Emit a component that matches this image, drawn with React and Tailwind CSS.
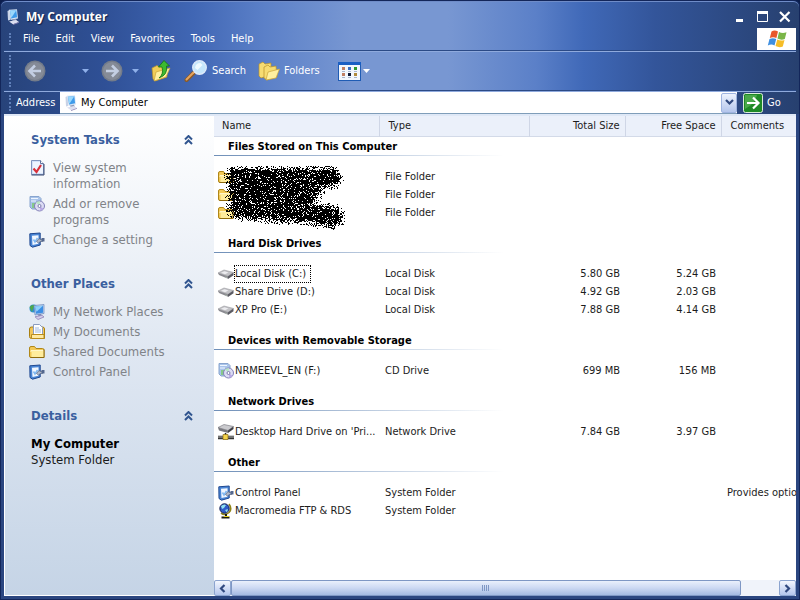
import React from "react";

const XP_FONT =
  "font-['Tahoma','DejaVu_Sans_Condensed','DejaVu_Sans',sans-serif]";

const ComputerIcon = ({ className = "w-4 h-4" }) => (
  <svg viewBox="0 0 16 16" className={className} aria-hidden="true">
    <path d="M1.500 2L4 .8V11l-2 .6z" fill="#c9d3e6" />
    <path d="M3 .8l8-.6 1 9.300-7.500 1.500z" fill="#d6e4f6" />
    <path d="M4 1.800l6.300-.5.8 7-6 1.300z" fill="#3f9bea" />
    <path d="M4 1.800l6.300-.5-5 7.600z" fill="#9ad8fc" />
    <path d="M6 10.500l4-.8 1 2.500-4 .8z" fill="#8f9bb8" />
    <path d="M3 12.500l7-1.500 3 2-6 2.200z" fill="#dcdff0" />
    <path d="M7 15.200l6-2.200v.8l-6 2.200z" fill="#8c82b4" />
  </svg>
);

const FolderIcon = ({ className = "w-4 h-4" }) => (
  <svg viewBox="0 0 16 16" className={className} aria-hidden="true">
    <path
      d="M.5 4q0-1.500 1.500-1.500h3.500l1.500 2h6.500q1.500 0 1.500 1.500v7.500h-13q-1.500 0-1.500-1.500z"
      fill="#f3c956"
      stroke="#b08718"
    />
    <path d="M2.500 6.500h12.500v6.500h-12.500z" fill="#ffec9c" />
    <path d="M2 8V6.500h12.500" fill="none" stroke="#fff6c8" />
    <path d="M1.500 13.500h13.500v-8" fill="none" stroke="#8f6a0c" />
  </svg>
);

const DocumentsIcon = () => (
  <svg viewBox="0 0 16 16" className="w-4 h-4" aria-hidden="true">
    <path d="M.5 5q0-2 2-2h11q2 0 2 2v9.500h-13q-2 0-2-2z" fill="#f2c65a" stroke="#a97f10" />
    <path d="M4.500 .5h6l3 3v8h-9z" fill="#fff" stroke="#8a9cc0" />
    <path d="M6 4h4M6 6h6M6 8h6" stroke="#9db8e0" />
    <path d="M2.500 10.500h12.500v4h-12.500z" fill="#ffe9a0" stroke="#b98c1c" />
  </svg>
);

const InfoIcon = () => (
  <svg viewBox="0 0 16 16" className="w-4 h-4" aria-hidden="true">
    <path d="M2.500 .5h9l3 3v11h-12z" fill="#d3e2fa" stroke="#8295bd" />
    <path d="M4 2h7v3h3v8H4z" fill="#eef4fe" />
    <path d="M11.500 .5v3h3" fill="#fff" stroke="#62759f" />
    <path d="M4.500 8.500l3 3.500 4.500-7" fill="none" stroke="#d8303a" strokeWidth="2.200" />
    <path d="M2.500 15h12.500V4" fill="none" stroke="#3a4a72" />
  </svg>
);

const CdIcon = () => (
  <svg viewBox="0 0 16 16" className="w-4 h-4" aria-hidden="true">
    <path d="M1 .5h9l2 2V13H3l-2-2z" fill="#a9c4ea" stroke="#88a4ce" />
    <path d="M2 2.500h7M2 5h5" stroke="#eef5ff" />
    <path d="M3 7h4v5H3z" fill="#86c98a" />
    <circle cx="10.500" cy="10" r="5" fill="#dcdcf4" stroke="#8280b8" />
    <path d="M10.500 10L7 6.500a5 5 0 0 1 4-1.300z" fill="#b8e6c4" />
    <path d="M10.500 10l4 2.800a5 5 0 0 1-3 2z" fill="#b9a8e6" />
    <circle cx="10.500" cy="10" r="1.500" fill="#fff" stroke="#7c7cae" />
  </svg>
);

const ControlPanelIcon = () => (
  <svg viewBox="0 0 16 16" className="w-4 h-4" aria-hidden="true">
    <path d="M.8 1.800L11.200 1v12L3.500 15.200 1 13.500z" fill="#4a86d6" stroke="#1f4890" />
    <path d="M3 3.800l6.500-.6v8.600L3.500 13z" fill="#f1f7ff" />
    <path d="M4.500 7.500l1.500 2.500 2.500-4" fill="none" stroke="#7fb8f2" strokeWidth="1.500" />
    <path d="M7.500 9.500l2.500-3 1.500 1h2v2h-2L9.500 11z" fill="#b0b8c8" stroke="#55627c" strokeWidth=".7" />
    <path d="M12.500 6h3v3.500h-3z" fill="#54688f" />
  </svg>
);

const NetworkIcon = () => (
  <svg viewBox="0 0 16 16" className="w-4 h-4" aria-hidden="true">
    <circle cx="4.500" cy="4.500" r="4" fill="#2c8fd0" />
    <path d="M.5 3q3-3 5-1.500L4 5 3 8z" fill="#4fa84c" />
    <path d="M5 1.500l10-1v9L6 11z" fill="#bcd2f0" stroke="#6b87ba" strokeWidth=".7" />
    <path d="M6 2.500l8-.8v7L7 9.800z" fill="#3c8ee4" />
    <path d="M6 2.500l8-.8-6.500 6z" fill="#8fd0fb" />
    <path d="M9 10.500l3-.6.6 1.600-3 .5z" fill="#7c88b0" />
    <path d="M6 12.800l7-1.500 2 1.700-6 2.500z" fill="#d4cdea" stroke="#8377b0" strokeWidth=".7" />
  </svg>
);

const DriveIcon = () => (
  <svg viewBox="0 0 16 16" className="w-4 h-4" aria-hidden="true">
    <path d="M0 7l6-3 9.500 2.500-5.500 3.800z" fill="#c2c2c6" stroke="#98989e" strokeWidth=".6" />
    <path d="M0 7l10 3.300v2.500L1 9z" fill="#8a8a90" />
    <path d="M10 10.300l5.500-3.800v2.800L10 13z" fill="#5a5a62" />
    <path d="M3 6.800l3.500-1.600 4 1.200-3.500 1.800z" fill="#ececef" />
    <path d="M7.500 11l1.500.5" stroke="#a8b8a8" />
  </svg>
);

const NetDriveIcon = () => (
  <svg viewBox="0 0 16 16" className="w-4 h-4" aria-hidden="true">
    <path d="M0 3.500l6-3 9.500 2-5.500 4z" fill="#cacace" stroke="#707078" strokeWidth=".6" />
    <path d="M0 3.500l10 3V9L1 6.500z" fill="#77777d" />
    <path d="M10 6.500l5.500-4V5L10 9z" fill="#3e3e46" />
    <path d="M7.500 9v3" stroke="#222" strokeWidth="1.500" />
    <path d="M0 13.500h16" stroke="#333" strokeWidth="3.500" />
    <path d="M0 13h16" stroke="#b4b4b4" />
    <path d="M5 10.500h5v5H5z" fill="#f3d24a" stroke="#8b6b10" strokeWidth=".7" />
  </svg>
);

const GlobeIcon = () => (
  <svg viewBox="0 0 16 16" className="w-4 h-4" aria-hidden="true">
    <path d="M11 1q3.500 5 0 8.500-4 3.500-8 .5" fill="none" stroke="#8f8418" strokeWidth="1.600" />
    <circle cx="6.500" cy="5.500" r="4.700" fill="#2f5cc8" stroke="#101c50" />
    <path d="M3 3q3-2.500 5-1L6 5 4 6zM7 7l3-1-1 3.500z" fill="#8fe0f0" />
    <path d="M8 11v2.500M3.500 14.500h8" stroke="#1c1c10" strokeWidth="2" />
    <path d="M6 13.500h5" stroke="#e6d21c" />
  </svg>
);

const DoubleChevron = () => (
  <svg viewBox="0 0 9 10" className="w-[9px] h-[10px]" aria-hidden="true">
    <path d="M1 4.500L4.500 1 8 4.500M1 9L4.500 5.500 8 9" fill="none" stroke="#31558f" strokeWidth="2" />
  </svg>
);

const NavArrow = ({ flip }) => (
  <svg viewBox="0 0 22 22" className="w-[22px] h-[22px]" aria-hidden="true">
    <circle cx="11" cy="11" r="10.500" fill="#747c8a" />
    <circle cx="11" cy="11" r="9" fill="#858b97" />
    <path
      d={flip ? "M5 11h11M11 5.500l5.500 5.500-5.500 5.500" : "M17 11H6M11 5.500L5.500 11l5.500 5.500"}
      fill="none"
      stroke="#c3cee2"
      strokeWidth="2.600"
    />
  </svg>
);

const DropArrow = ({ className }) => (
  <svg viewBox="0 0 7 4" className={`w-[7px] h-1 ${className}`} aria-hidden="true">
    <path d="M0 0h7L3.500 4z" fill="currentColor" />
  </svg>
);

const UpFolderIcon = () => (
  <svg viewBox="0 0 20 22" className="w-5 h-[22px]" aria-hidden="true">
    <path d="M1 8l5-2.500 2 1.500 7-2 1 12-12 4-2-2z" fill="#f0cd58" stroke="#b8902a" strokeWidth=".7" />
    <path d="M3 21l2-9 14-4-4 9z" fill="#fff0a0" stroke="#c9a43a" strokeWidth=".7" />
    <path d="M8 18q5-4 3-11H7.500L13 .5 18.500 6h-3q1.500 9-7.500 12z" fill="#3cba30" stroke="#14720f" strokeWidth=".8" />
  </svg>
);

const SearchIcon = () => (
  <svg viewBox="0 0 24 22" className="w-6 h-[22px]" aria-hidden="true">
    <path d="M2.500 20L9.500 13" stroke="#8a5a28" strokeWidth="4" strokeLinecap="round" />
    <path d="M2.500 19.500L9.500 12.500" stroke="#e5a560" strokeWidth="2" strokeLinecap="round" />
    <circle cx="15.500" cy="7.500" r="6.800" fill="#c5e6fb" stroke="#dfeafa" strokeWidth="1.300" />
    <path d="M11 8q.5-5 5.500-5l2 2-5 5z" fill="#effaff" />
  </svg>
);

const FoldersIcon = () => (
  <svg viewBox="0 0 22 20" className="w-[22px] h-5" aria-hidden="true">
    <path d="M1 3l4-2 2 2 6-1v12l-10 3-2-2z" fill="#f7dc72" stroke="#b8902a" strokeWidth=".7" />
    <path d="M6 6l4-2 2 2 6-1 1 11-10 3-3-2z" fill="#f7dc72" stroke="#b8902a" strokeWidth=".7" />
    <path d="M8 19l2-8 11.500-3-3.500 9z" fill="#fff0a0" stroke="#c9a43a" strokeWidth=".7" />
  </svg>
);

const ViewsIcon = () => (
  <svg viewBox="0 0 23 19" className="w-[23px] h-[19px]" aria-hidden="true">
    <rect x=".5" y=".5" width="22" height="18" fill="#f3f7fd" stroke="#1f5cb4" />
    <path d="M0 1.500h23" stroke="#1a5fc4" strokeWidth="3" />
    <path d="M4 5h3v3H4zM4 11h3v3H4z" fill="#c07f62" />
    <path d="M10 5h3v3h-3z" fill="#3a6fc4" />
    <path d="M10 11h3v3h-3z" fill="#111c3a" />
    <path d="M16 5h3v3h-3z" fill="#2f9a30" />
    <path d="M16 11h3v3h-3z" fill="#b08a3c" />
    <path d="M4 9.500h3M10 9.500h3M16 9.500h3M4 15.500h3M10 15.500h3M16 15.500h3" stroke="#a9b6cc" />
  </svg>
);

const WindowsLogo = () => (
  <svg viewBox="0 0 20 18" className="w-5 h-[18px]" aria-hidden="true">
    <path d="M4.500 1.500q3-2 6.500 0L9.400 8Q6 6.500 2.800 8z" fill="#e8582c" />
    <path d="M12 2q3.500 2 7.500.3L17.800 9Q14 10.500 10.500 8.500z" fill="#7ab648" />
    <path d="M2.500 9q3.500-1.600 6.700 0L7.500 15.500q-3-1.800-6.700 0z" fill="#3f8fe0" />
    <path d="M10.300 9.600q3.500 1.700 7.200.4l-1.700 6.500q-3.500 1.500-7.300-.5z" fill="#f6bd27" />
  </svg>
);

// black spray over the three folder names, one pixel per dot
const STROKES = [
  [12, 11, 106, 11],
  [14, 29, 82, 30],
  [14, 41, 60, 46],
  [60, 44, 108, 50],
  [14, 20, 88, 22],
];

const buildSpray = () => {
  let seed = 7;
  const rand = () => {
    seed = (seed * 16807) % 2147483647;
    return seed / 2147483647;
  };
  let d = "";
  for (let y = 0; y < 64; y++) {
    for (let x = 0; x < 122; x++) {
      let dist = 99;
      STROKES.forEach(([x1, y1, x2, y2]) => {
        const len = (x2 - x1) ** 2 + (y2 - y1) ** 2;
        const t = Math.max(
          0,
          Math.min(1, ((x - x1) * (x2 - x1) + (y - y1) * (y2 - y1)) / len)
        );
        dist = Math.min(
          dist,
          Math.hypot(x - x1 - t * (x2 - x1), y - y1 - t * (y2 - y1))
        );
      });
      const chance = dist < 6 ? 0.86 : Math.max(0, 0.86 - (dist - 6) * 0.11);
      if (rand() < chance) d += `M${x} ${y}h1v1h-1z`;
    }
  }
  return d;
};

const SPRAY = buildSpray();

const groups = [
  {
    title: "Files Stored on This Computer",
    rows: [
      { icon: FolderIcon, name: "", type: "File Folder", spray: true },
      { icon: FolderIcon, name: "", type: "File Folder" },
      { icon: FolderIcon, name: "", type: "File Folder" },
    ],
  },
  {
    title: "Hard Disk Drives",
    rows: [
      { icon: DriveIcon, name: "Local Disk (C:)", type: "Local Disk", total: "5.80 GB", free: "5.24 GB", focused: true },
      { icon: DriveIcon, name: "Share Drive (D:)", type: "Local Disk", total: "4.92 GB", free: "2.03 GB" },
      { icon: DriveIcon, name: "XP Pro (E:)", type: "Local Disk", total: "7.88 GB", free: "4.14 GB" },
    ],
  },
  {
    title: "Devices with Removable Storage",
    rows: [
      { icon: CdIcon, name: "NRMEEVL_EN (F:)", type: "CD Drive", total: "699 MB", free: "156 MB" },
    ],
  },
  {
    title: "Network Drives",
    rows: [
      { icon: NetDriveIcon, name: "Desktop Hard Drive on 'Pri...", type: "Network Drive", total: "7.84 GB", free: "3.97 GB" },
    ],
  },
  {
    title: "Other",
    rows: [
      { icon: ControlPanelIcon, name: "Control Panel", type: "System Folder", comments: "Provides optio" },
      { icon: GlobeIcon, name: "Macromedia FTP & RDS", type: "System Folder" },
    ],
  },
];

const tasks = [
  { icon: InfoIcon, label: "View system information" },
  { icon: CdIcon, label: "Add or remove programs" },
  { icon: ControlPanelIcon, label: "Change a setting" },
];

const places = [
  { icon: NetworkIcon, label: "My Network Places" },
  { icon: DocumentsIcon, label: "My Documents" },
  { icon: FolderIcon, label: "Shared Documents" },
  { icon: ControlPanelIcon, label: "Control Panel" },
];

const Grip = ({ className }) => (
  <span className={`ml-[5px] w-0 border-l-2 border-dotted border-[#5f7fb8] ${className}`} />
);

const TitleBar = () => (
  <div className="flex items-center h-[26px] pl-[2px] pr-[5px] pt-1">
    <ComputerIcon />
    <h1 className="ml-1 flex-1 font-['Trebuchet_MS','Open_Sans',sans-serif] text-[12px] leading-4 font-bold [text-shadow:1px_1px_1px_#10204a]">
      My Computer
    </h1>
    <div className="flex items-center gap-[10px]">
      <button aria-label="Minimize">
        <svg viewBox="0 0 12 12" className="block w-3 h-3">
          <path d="M1 8h7v3H1z" fill="#fff" />
        </svg>
      </button>
      <button aria-label="Maximize">
        <svg viewBox="0 0 12 12" className="block w-3 h-3">
          <path d="M.5 1v9.500h10V1" fill="none" stroke="#fff" />
          <path d="M0 1.500h11" stroke="#fff" strokeWidth="3" />
        </svg>
      </button>
      <button aria-label="Close">
        <svg viewBox="0 0 12 12" className="block w-3 h-3">
          <path d="M1 1l9.500 9.500M10.500 1L1 10.500" stroke="#fff" strokeWidth="2.200" />
        </svg>
      </button>
    </div>
  </div>
);

const MenuBar = () => (
  <nav className="flex items-center h-[23px] border-b border-[#2b4a86]">
    <Grip className="h-3" />
    <div className="flex flex-1 ml-1">
      {["File", "Edit", "View", "Favorites", "Tools", "Help"].map((item) => (
        <button key={item} className="px-2">
          {item}
        </button>
      ))}
    </div>
    <div className="flex items-center justify-center self-stretch w-[39px] bg-white">
      <WindowsLogo />
    </div>
  </nav>
);

const Toolbar = () => (
  <div className="flex items-center h-10 border-t border-b border-t-[#8faadd] border-b-[#2b4a86]">
    <Grip className="h-8" />
    <button className="ml-[13px]" aria-label="Back">
      <NavArrow />
    </button>
    <button className="ml-9" aria-label="Back history">
      <DropArrow className="text-[#8fb0ea]" />
    </button>
    <button className="ml-3" aria-label="Forward">
      <NavArrow flip />
    </button>
    <button className="ml-[9px]" aria-label="Forward history">
      <DropArrow className="text-[#8fb0ea]" />
    </button>
    <button className="ml-3" aria-label="Up">
      <UpFolderIcon />
    </button>
    <button className="ml-[13px] flex items-center gap-1">
      <SearchIcon />
      Search
    </button>
    <button className="ml-3 flex items-center gap-1">
      <FoldersIcon />
      Folders
    </button>
    <button className="ml-[18px] flex items-center gap-[2px]" aria-label="Views">
      <ViewsIcon />
      <DropArrow className="text-white" />
    </button>
  </div>
);

const AddressBar = () => (
  <form className="flex items-center h-[23px] border-t border-[#8faadd]">
    <Grip className="h-4" />
    <label htmlFor="address" className="ml-[5px] w-11">
      Address
    </label>
    <div className="flex flex-1 self-stretch items-center bg-white border-b border-[#7f9db9] pl-1">
      <ComputerIcon />
      <input
        id="address"
        type="text"
        defaultValue="My Computer"
        className="ml-[1px] flex-1 min-w-0 h-5 bg-transparent text-black outline-none"
      />
      <button
        type="button"
        aria-label="Show addresses"
        className="flex items-center justify-center w-4 h-5 rounded-xs border border-[#9fb4e0] bg-linear-to-b from-[#eef3fd] to-[#b4c6ec]"
      >
        <svg viewBox="0 0 9 7" className="w-[9px] h-[7px]" aria-hidden="true">
          <path d="M1 1l3.500 3.500L8 1" fill="none" stroke="#31497f" strokeWidth="2.200" />
        </svg>
      </button>
    </div>
    <button type="button" className="flex items-center gap-1 pl-[6px] w-[59px]">
      <svg viewBox="0 0 20 20" className="w-5 h-5" aria-hidden="true">
        <rect x=".5" y=".5" width="19" height="19" rx="2" fill="#1f8a26" stroke="#dcecdc" />
        <path d="M2 2h12q-2 9-12 14z" fill="#4aa94a" />
        <path d="M4 10h11M10 4.500l5.500 5.500-5.500 5.500" fill="none" stroke="#fff" strokeWidth="2.200" />
      </svg>
      Go
    </button>
  </form>
);

const PanelHeading = ({ children }) => (
  <h2 className="flex items-center justify-between mb-[10px] text-[13px] leading-5 font-bold text-[#3a5f9f]">
    {children}
    <button aria-label={`Collapse ${children}`}>
      <DoubleChevron />
    </button>
  </h2>
);

const LinkPanel = ({ title, items }) => (
  <section>
    <PanelHeading>{title}</PanelHeading>
    <ul className="flex flex-col gap-1">
      {items.map(({ icon: Icon, label }) => (
        <li key={label}>
          <a href="#" className="flex gap-2 -ml-[2px] text-[#808388]">
            <span className="shrink-0">
              <Icon />
            </span>
            <span className="max-w-28">{label}</span>
          </a>
        </li>
      ))}
    </ul>
  </section>
);

const Sidebar = () => (
  <aside className="flex flex-col gap-[26px] shrink-0 w-[210px] pt-[14px] pl-[26px] pr-[21px] text-[13px] leading-4 border-l border-b border-white bg-linear-to-b from-white via-[#dfe7f2] to-[#c5d4e6]">
    <LinkPanel title="System Tasks" items={tasks} />
    <LinkPanel title="Other Places" items={places} />
    <section>
      <PanelHeading>Details</PanelHeading>
      <p className="font-bold text-black">My Computer</p>
      <p className="text-[#1a1a1a]">System Folder</p>
    </section>
  </aside>
);

const FileTable = () => (
  <table className="w-full table-fixed text-[#1c1c1c]">
    <thead className="bg-[#ebf0fa] border-b border-[#d3dae8]">
      <tr className="h-5 leading-4 text-left">
        <th className="w-[165px] pl-2 font-normal border-r border-[#cfd6e6]">Name</th>
        <th className="w-[150px] pl-[9px] font-normal border-r border-[#cfd6e6]">Type</th>
        <th className="w-24 pr-[5px] font-normal text-right border-r border-[#cfd6e6]">Total Size</th>
        <th className="w-24 pr-[5px] font-normal text-right border-r border-[#cfd6e6]">Free Space</th>
        <th className="pl-[9px] font-normal">Comments</th>
      </tr>
    </thead>
    {groups.map((group, i) => (
      <tbody key={group.title}>
        <tr>
          <th colSpan={5} className={`pb-3 text-left ${i > 0 ? "pt-3" : ""}`}>
            <div className="pl-[14px] h-[18px] leading-5 text-black">{group.title}</div>
            <div className="h-px w-[290px] bg-linear-to-r from-[#6f8fb8] to-white" />
          </th>
        </tr>
        {group.rows.map(({ icon: Icon, ...row }, j) => (
          <tr key={j} className="h-[18px] leading-4 whitespace-nowrap">
            <td className="relative pl-1">
              <div className="flex items-center gap-px">
                <span className="shrink-0">
                  <Icon />
                </span>
                <span className={row.focused ? "pr-1 outline-1 outline-dotted outline-black" : ""}>
                  {row.name}
                </span>
              </div>
              {row.spray && (
                <svg viewBox="0 0 122 64" className="absolute z-10 left-[10px] -top-[2px] w-[122px] h-16" aria-hidden="true">
                  <path d={SPRAY} shapeRendering="crispEdges" />
                </svg>
              )}
            </td>
            <td className="pl-[6px]">{row.type}</td>
            <td className="pr-[5px] text-right">{row.total}</td>
            <td className="pr-[5px] text-right">{row.free}</td>
            <td className="pl-[6px]">{row.comments}</td>
          </tr>
        ))}
      </tbody>
    ))}
  </table>
);

const ScrollButton = ({ label, d }) => (
  <button
    aria-label={label}
    className="flex items-center justify-center w-[17px] h-4 rounded-xs border border-[#8ca4cf] bg-linear-to-b from-[#f4f7fe] to-[#b4c6ec]"
  >
    <svg viewBox="0 0 7 9" className="w-[7px] h-[9px]" aria-hidden="true">
      <path d={d} fill="none" stroke="#31497f" strokeWidth="2.200" />
    </svg>
  </button>
);

const ScrollBar = () => (
  <div className="flex h-4 bg-[#f0f3fa]">
    <ScrollButton label="Scroll left" d="M5.500 1L2 4.500 5.500 8" />
    <div className="flex-1">
      <div className="flex items-center justify-center w-[93%] h-4 rounded-xs border border-[#7f97c4] bg-linear-to-b from-[#eaf0fc] via-[#ccd8f2] to-[#a4bae2]">
        <svg viewBox="0 0 8 6" className="w-2 h-[6px]" aria-hidden="true">
          <path d="M.5 0v6M2.500 0v6M4.500 0v6M6.500 0v6" stroke="#7f97c4" />
        </svg>
      </div>
    </div>
    <ScrollButton label="Scroll right" d="M1.500 1L5 4.500 1.500 8" />
  </div>
);

export default function App() {
  return (
    <div className="bg-[#0b1d4c]">
      <div
        className={`flex flex-col min-h-screen rounded-t-md border border-[#13265a] bg-[#2b4680] text-[11px] ${XP_FONT}`}
      >
        <header className="px-[3px] rounded-t-md text-white border-t border-[#6f8cc8] bg-[linear-gradient(to_right,#27437a_0%,#2f5096_13%,#4066b4_24%,#5b80c8_33%,#7897d2_44%,#7897d2_56%,#5b80c8_67%,#4069b8_73%,#33559a_82%,#27406f_100%)]">
          <TitleBar />
          <MenuBar />
          <Toolbar />
          <AddressBar />
        </header>
        <main className="flex flex-1 mx-[3px] mb-[3px] border-t-2 border-[#dfe8f6] bg-white">
          <Sidebar />
          <div className="flex flex-col flex-1 min-w-0">
            <div className="flex-1 overflow-hidden">
              <FileTable />
            </div>
            <ScrollBar />
          </div>
        </main>
      </div>
    </div>
  );
}
